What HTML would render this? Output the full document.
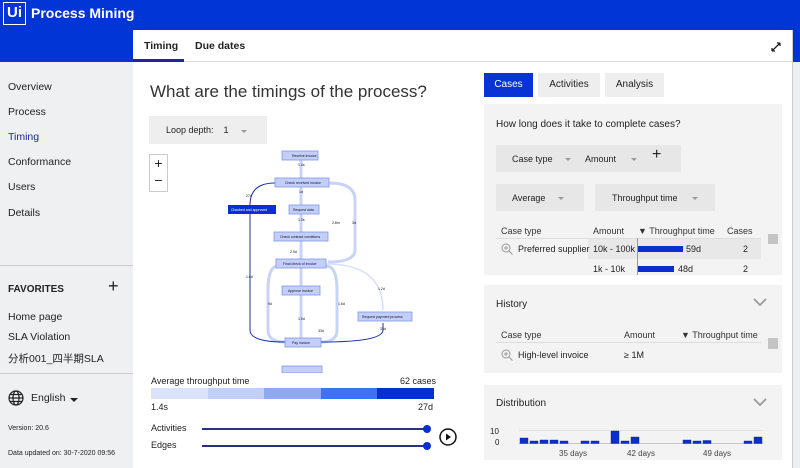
<!DOCTYPE html>
<html><head><meta charset="utf-8"><style>
*{box-sizing:border-box;margin:0;padding:0}
body{width:800px;height:468px;overflow:hidden;font-family:"Liberation Sans","Noto Sans CJK SC",sans-serif;background:#eceef0;position:relative;color:#222}
.hdr{position:absolute;left:0;top:0;width:800px;height:62px;background:#0235d6}
.logo{position:absolute;left:3px;top:2px;width:23px;height:23px;border:1.5px solid #fff;color:#fff;font-size:15px;font-weight:bold;line-height:20px;text-align:center}
.title{position:absolute;left:31px;top:5px;color:#fff;font-size:14px;font-weight:bold}
.side{position:absolute;left:0;top:62px;width:133px;height:406px;background:#eef0f2}
.side div{position:absolute;left:8px;font-size:10.5px;color:#222}
.card{position:absolute;left:133px;top:30px;width:660px;height:438px;background:#fff;border-right:1px solid #ccc}
.tabs{height:32px;border-bottom:1px solid #ddd;position:relative}
.tabs span{position:absolute;top:10px;font-size:10.5px;font-weight:bold}
.abs{position:absolute}
.gbox{position:absolute;background:#eeeeee}
.dd{position:absolute;width:0;height:0;border-left:3.5px solid transparent;border-right:3.5px solid transparent;border-top:3.5px solid #999}
.sm{font-size:9px}
</style></head><body>
<div class="hdr"><div class="logo">Ui</div><div class="title">Process Mining</div></div>
<div class="side">
<div style="top:19px">Overview</div>
<div style="top:44px">Process</div>
<div style="top:69px;color:#1a2a9a">Timing</div>
<div style="top:94px">Conformance</div>
<div style="top:119px">Users</div>
<div style="top:145px">Details</div>
<div style="top:203px;left:0;width:133px;height:1px;background:#ccc"></div>
<div style="top:222px;font-weight:bold;font-size:10px">FAVORITES</div>
<div style="top:214px;left:108px;font-size:18px">+</div>
<div style="top:249px">Home page</div>
<div style="top:269px">SLA Violation</div>
<div style="top:289px">分析001_四半期SLA</div>
<div style="top:311px;left:0;width:133px;height:1px;background:#ccc"></div>
<div style="top:328px"><svg width="16" height="16" viewBox="0 0 16 16" fill="none" stroke="#222" stroke-width="1.2"><circle cx="8" cy="8" r="7"/><ellipse cx="8" cy="8" rx="3" ry="7"/><path d="M1 8h14M2 4.5h12M2 11.5h12"/></svg></div>
<div style="top:330px;left:31px">English</div>
<div class="dd" style="top:336px;left:70px;border-top-color:#222;border-width:4px 4px 0"></div>
<div style="top:363px;font-size:7px">Version: 20.6</div>
<div style="top:388px;font-size:7px">Data updated on: 30-7-2020 09:56</div>
</div>
<div class="card">
<div class="tabs"><span style="left:11px">Timing</span><span style="left:62px">Due dates</span>
<div class="abs" style="left:0;top:29px;width:51px;height:3px;background:#1a2a9a"></div>
<svg class="abs" style="left:638px;top:12px" width="10" height="10" viewBox="0 0 10 10" stroke="#222" stroke-width="1.3"><path d="M1 9L9 1M1 9V6M1 9H4M9 1H6M9 1V4"/></svg></div>
<div class="abs" style="left:17px;top:52px;font-size:17px;font-weight:300;color:#333">What are the timings of the process?</div>
<div class="gbox" style="left:16px;top:86px;width:118px;height:28px"></div>
<div class="abs" style="left:33px;top:95px;font-size:9px">Loop depth:&nbsp;&nbsp;&nbsp; 1</div>
<div class="dd" style="left:108px;top:100px"></div>
<div class="abs" style="left:16px;top:124px;width:19px;height:38px;border:1px solid #ccc;background:#fff;font-size:14px;text-align:center;line-height:17px">+<br>−</div>
<svg class="abs" style="left:87px;top:118px" width="220" height="225" viewBox="220 148 220 225" fill="none" font-family="Liberation Sans" font-size="4" >
<g stroke="#c8d3fa" stroke-width="3"><path d="M301 160V178M301 187V205M301 214V233M301 240V260M301 268V287M301 294V338M329 183Q355 183 355 200V250Q355 262 328 262M278 266Q268 266 268 290V330Q268 342 285 342M326 266Q337 266 337 290V330Q337 342 321 342"/></g>
<g stroke="#d8e0fc" stroke-width="1.5"><path d="M326 264Q383 264 383 310"/></g>
<g stroke="#1c36b0" stroke-width="1"><path d="M275 183Q250 183 250 205M250 213V330Q250 342 285 342M383 323V330Q383 342 321 342"/></g>
<g fill="#c3cff8" stroke="#7f97ea" stroke-width=".8"><rect x="282" y="151" width="36" height="9"/><rect x="275" y="178" width="54" height="9"/><rect x="289" y="205" width="30" height="9"/><rect x="274" y="232" width="54" height="9"/><rect x="276" y="259" width="50" height="9"/><rect x="282" y="286" width="38" height="9"/><rect x="358" y="312" width="54" height="9"/><rect x="285" y="338" width="36" height="9"/><rect x="282" y="366" width="40" height="7"/></g>
<rect x="228" y="205" width="48" height="9" fill="#0a2fcf"/>
<g fill="#112" font-size="3.5"><text x="292" y="157">Receive invoice</text><text x="285" y="184">Check received invoice</text><text x="293" y="211">Request data</text><text x="280" y="238">Check contract conditions</text><text x="283" y="265">Final check of invoice</text><text x="288" y="292">Approve invoice</text><text x="362" y="318">Request payment process</text><text x="292" y="344">Pay invoice</text><text x="231" y="211" fill="#fff">Checked and approved</text>
<text x="298" y="166">1.4s</text><text x="299" y="193">1d</text><text x="298" y="221">1.3s</text><text x="332" y="224">2.8m</text><text x="352" y="224">3d</text><text x="246" y="197">27d</text><text x="246" y="278">1.6d</text><text x="290" y="253">2.5d</text><text x="268" y="305">9d</text><text x="338" y="305">1.6d</text><text x="378" y="290">1.2d</text><text x="380" y="330">33d</text><text x="298" y="320">1.5d</text><text x="318" y="332">33d</text></g>
</svg>
<div class="abs sm" style="left:18px;top:346px">Average throughput time</div>
<div class="abs sm" style="left:267px;top:346px">62 cases</div>
<div class="abs" style="left:18px;top:358px;width:283px;height:11px;display:flex"><div style="flex:1;background:#dbe3fb"></div><div style="flex:1;background:#c2cff8"></div><div style="flex:1;background:#8ea8f2"></div><div style="flex:1;background:#3e73f0"></div><div style="flex:1;background:#0530cf"></div></div>
<div class="abs sm" style="left:18px;top:372px">1.4s</div>
<div class="abs sm" style="left:285px;top:372px">27d</div>
<div class="abs sm" style="left:18px;top:393px">Activities</div>
<div class="abs sm" style="left:18px;top:410px">Edges</div>
<div class="abs" style="left:69px;top:398px;width:225px;height:2px;background:#2a2f8a"></div>
<div class="abs" style="left:69px;top:415px;width:225px;height:2px;background:#2a2f8a"></div>
<div class="abs" style="left:290px;top:395px;width:8px;height:8px;border-radius:50%;background:#0a2fcf"></div>
<div class="abs" style="left:290px;top:412px;width:8px;height:8px;border-radius:50%;background:#0a2fcf"></div>
<svg class="abs" style="left:306px;top:398px" width="18" height="18" viewBox="0 0 18 18"><circle cx="9" cy="9" r="8" fill="none" stroke="#111" stroke-width="1.5"/><path d="M7 5.5L12 9L7 12.5Z" fill="#111"/></svg>

<div class="abs" style="left:351px;top:43px;width:49px;height:24px;background:#0a33d6;color:#fff;font-size:10px;text-align:center;line-height:24px">Cases</div>
<div class="gbox" style="left:405px;top:43px;width:62px;height:24px;font-size:10px;text-align:center;line-height:24px">Activities</div>
<div class="gbox" style="left:472px;top:43px;width:59px;height:24px;font-size:10px;text-align:center;line-height:24px">Analysis</div>
<div class="abs" style="left:351px;top:74px;width:298px;height:171px;background:#f3f3f3"></div>
<div class="abs" style="left:363px;top:89px;font-size:10px">How long does it take to complete cases?</div>
<div class="gbox" style="left:363px;top:115px;width:185px;height:27px;background:#e7e7e7"></div>
<div class="abs sm" style="left:379px;top:124px">Case type</div><div class="dd" style="left:432px;top:128px"></div>
<div class="abs sm" style="left:452px;top:124px">Amount</div><div class="dd" style="left:498px;top:128px"></div>
<div class="abs" style="left:519px;top:116px;font-size:16px">+</div>
<div class="gbox" style="left:363px;top:154px;width:88px;height:27px;background:#e7e7e7"></div>
<div class="abs sm" style="left:379px;top:163px">Average</div><div class="dd" style="left:425px;top:167px"></div>
<div class="gbox" style="left:462px;top:154px;width:120px;height:27px;background:#e7e7e7"></div>
<div class="abs sm" style="left:479px;top:163px">Throughput time</div><div class="dd" style="left:559px;top:167px"></div>
<div class="abs sm" style="left:368px;top:196px;color:#333">Case type</div>
<div class="abs sm" style="left:460px;top:196px;color:#333">Amount</div>
<div class="abs sm" style="left:505px;top:196px;color:#333">▼ Throughput time</div>
<div class="abs sm" style="left:594px;top:196px;color:#333">Cases</div>
<div class="abs" style="left:363px;top:208px;width:265px;height:1px;background:#ddd"></div>
<div class="abs" style="left:455px;top:209px;width:173px;height:20px;background:#e8e8e8"></div>
<svg class="abs" style="left:368px;top:213px" width="12" height="12" viewBox="0 0 12 12" fill="none" stroke="#999"><circle cx="5" cy="5" r="4"/><path d="M8 8l3.5 3.5M3 5h4M5 3v4"/></svg>
<div class="abs sm" style="left:385px;top:214px">Preferred supplier</div>
<div class="abs sm" style="left:460px;top:214px">10k - 100k</div>
<div class="abs" style="left:504px;top:208px;width:1px;height:37px;background:#999"></div>
<div class="abs" style="left:505px;top:216px;width:45px;height:6px;background:#0a2fcf"></div>
<div class="abs sm" style="left:553px;top:214px">59d</div>
<div class="abs sm" style="left:610px;top:214px">2</div>
<div class="abs sm" style="left:460px;top:234px">1k - 10k</div>
<div class="abs" style="left:505px;top:236px;width:36px;height:6px;background:#0a2fcf"></div>
<div class="abs sm" style="left:545px;top:234px">48d</div>
<div class="abs sm" style="left:610px;top:234px">2</div>
<div class="abs" style="left:635px;top:204px;width:10px;height:10px;background:#c4c4c4"></div>

<div class="abs" style="left:351px;top:255px;width:298px;height:88px;background:#f3f3f3"></div>
<div class="abs" style="left:363px;top:269px;font-size:10px">History</div>
<svg class="abs" style="left:620px;top:268px" width="14" height="9"><path d="M1 1l6 6 6-6" stroke="#999" stroke-width="1.8" fill="none"/></svg>
<div class="abs sm" style="left:368px;top:300px;color:#333">Case type</div>
<div class="abs sm" style="left:491px;top:300px;color:#333">Amount</div>
<div class="abs sm" style="left:548px;top:300px;color:#333">▼ Throughput time</div>
<div class="abs" style="left:363px;top:312px;width:265px;height:1px;background:#ddd"></div>
<svg class="abs" style="left:368px;top:319px" width="12" height="12" viewBox="0 0 12 12" fill="none" stroke="#999"><circle cx="5" cy="5" r="4"/><path d="M8 8l3.5 3.5M3 5h4M5 3v4"/></svg>
<div class="abs sm" style="left:385px;top:320px">High-level invoice</div>
<div class="abs sm" style="left:491px;top:320px">≥ 1M</div>
<div class="abs" style="left:635px;top:308px;width:10px;height:11px;background:#c4c4c4"></div>

<div class="abs" style="left:351px;top:355px;width:298px;height:75px;background:#f3f3f3"></div>
<div class="abs" style="left:363px;top:368px;font-size:10px">Distribution</div>
<svg class="abs" style="left:620px;top:368px" width="14" height="9"><path d="M1 1l6 6 6-6" stroke="#999" stroke-width="1.8" fill="none"/></svg>
<div class="abs" style="left:357px;top:397px;font-size:8px">10</div>
<div class="abs" style="left:362px;top:408px;font-size:8px">0</div>
<svg class="abs" style="left:386px;top:400px" width="244" height="14"><path d="M0 .5H244" stroke="#ccc" stroke-width=".5"/><path d="M0 13.5H244" stroke="#999" stroke-width=".6"/>
<g fill="#0a2fcf" stroke="#0a2090" stroke-width=".4"><rect x="1" y="8" width="8" height="5.5"/><rect x="11" y="11" width="8" height="2.5"/><rect x="21" y="10" width="8" height="3.5"/><rect x="31" y="10" width="8" height="3.5"/><rect x="41" y="11" width="8" height="2.5"/><rect x="62" y="11" width="8" height="2.5"/><rect x="72" y="11" width="8" height="2.5"/><rect x="92" y="1" width="8" height="12.5"/><rect x="102" y="11" width="8" height="2.5"/><rect x="112" y="7" width="8" height="6.5"/><rect x="164" y="10" width="8" height="3.5"/><rect x="174" y="11" width="8" height="2.5"/><rect x="184" y="10.5" width="8" height="3"/><rect x="225" y="11" width="8" height="2.5"/><rect x="235" y="7" width="8" height="6.5"/></g></svg>
<div class="abs" style="left:426px;top:419px;font-size:8px;color:#444">35 days</div>
<div class="abs" style="left:494px;top:419px;font-size:8px;color:#444">42 days</div>
<div class="abs" style="left:570px;top:419px;font-size:8px;color:#444">49 days</div>
</div>
</body></html>
